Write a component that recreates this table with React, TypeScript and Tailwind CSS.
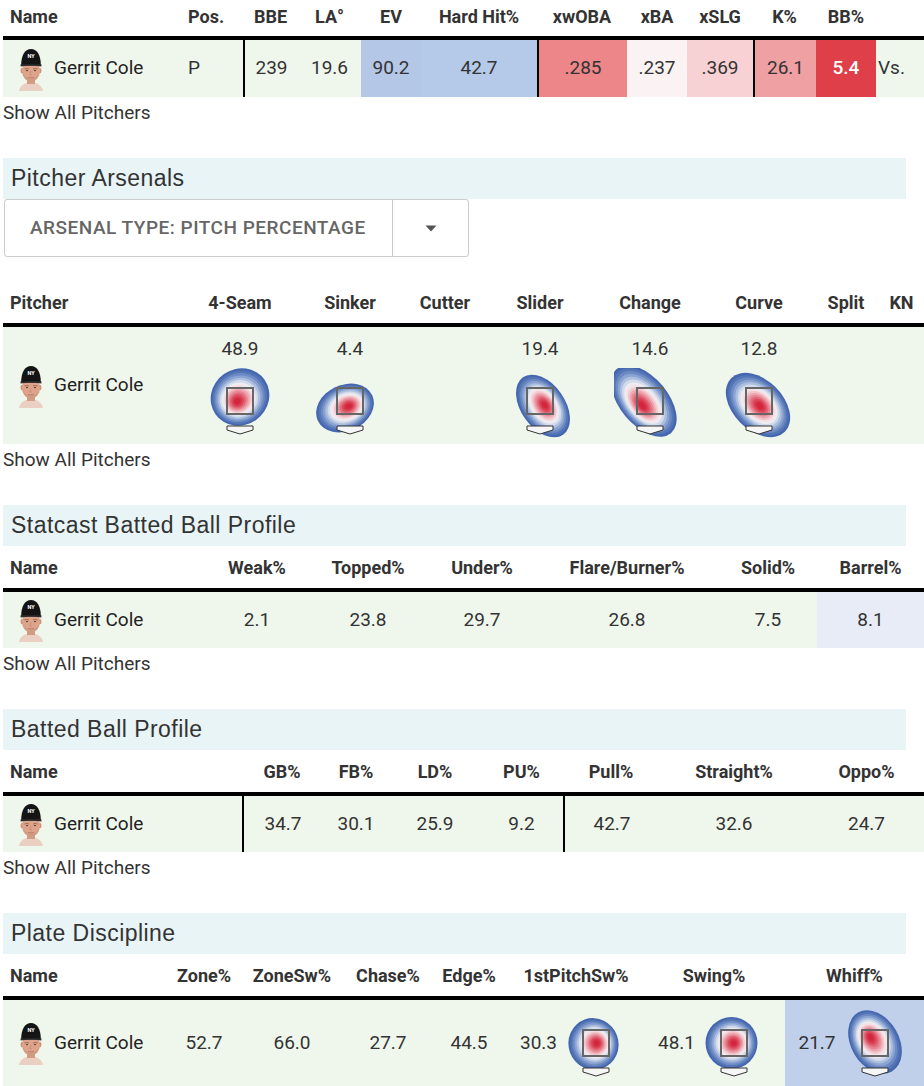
import React from 'react';

type HM = { cx: number; cy: number; rx: number; ry: number; rot: number; hx: number; hy: number };

const LEVELS: [number, string][] = [
  [1.0, '#4567b0'],
  [0.93, '#5575b7'],
  [0.86, '#6c8bc4'],
  [0.79, '#8ba3d1'],
  [0.72, '#adbfdf'],
  [0.65, '#d2dbeb'],
  [0.58, '#edecf1'],
  [0.52, '#f5e2e6'],
  [0.46, '#f2c8ce'],
  [0.4, '#eda8b1'],
  [0.34, '#e78894'],
  [0.28, '#e16878'],
  [0.22, '#dc4b5d'],
  [0.16, '#d73549'],
  [0.1, '#d1263d'],
];

function Heatmap({ p, className = '' }: { p: HM; className?: string }) {
  return (
    <svg width="72" height="72" viewBox="0 0 72 72" className={`shrink-0 ${className}`}>
      {LEVELS.map(([s, col], i) => {
        const t = 1 - s;
        const x = p.cx + (p.hx - p.cx) * t;
        const y = p.cy + (p.hy - p.cy) * t;
        return (
          <ellipse
            key={i}
            cx={x}
            cy={y}
            rx={Math.max(p.rx * s, 2)}
            ry={Math.max(p.ry * s, 2)}
            fill={col}
            transform={`rotate(${p.rot} ${x} ${y})`}
          />
        );
      })}
      <rect x="23" y="20" width="26" height="26" fill="none" stroke="#666" strokeWidth="2" />
      <path d="M23 58 H49 V62 L36 66 L23 62 Z" fill="#f6f6f6" stroke="#333" strokeWidth="1" />
    </svg>
  );
}

const HM_4SEAM: HM = { cx: 36, cy: 29, rx: 30, ry: 28, rot: -35, hx: 33, hy: 34 };
const HM_SINKER: HM = { cx: 31, cy: 40, rx: 30, ry: 23, rot: -25, hx: 35, hy: 38 };
const HM_SLIDER: HM = { cx: 39, cy: 38, rx: 35, ry: 22, rot: 55, hx: 41, hy: 37 };
const HM_CHANGE: HM = { cx: 30, cy: 33, rx: 42, ry: 24, rot: 50, hx: 28, hy: 38 };
const HM_CURVE: HM = { cx: 35, cy: 37, rx: 38, ry: 25, rot: 45, hx: 37, hy: 38 };
const HM_FIRST: HM = { cx: 33.5, cy: 34, rx: 25, ry: 26, rot: -20, hx: 37, hy: 33 };
const HM_SWING: HM = { cx: 33.5, cy: 33, rx: 26, ry: 26, rot: 0, hx: 36, hy: 33 };
const HM_WHIFF: HM = { cx: 36, cy: 32, rx: 34, ry: 24, rot: 60, hx: 31, hy: 27 };

function Headshot() {
  return (
    <svg width="28" height="44" viewBox="0 0 28 44" className="shrink-0">
      <path d="M2 44 C3 38 8 35.5 14 35.5 C20 35.5 25 38 26 44 Z" fill="#ead0c2" />
      <rect x="10" y="31" width="8" height="6" fill="#d49c83" />
      <ellipse cx="5.2" cy="23.5" rx="1.7" ry="2.7" fill="#cf9276" />
      <ellipse cx="22.8" cy="23.5" rx="1.7" ry="2.7" fill="#cf9276" />
      <ellipse cx="14" cy="24" rx="9" ry="10.6" fill="#dda48b" />
      <path d="M7.5 22 Q10 21 12 22" stroke="#8a5f4c" strokeWidth="0.8" fill="none" />
      <path d="M16 22 Q18 21 20.5 22" stroke="#8a5f4c" strokeWidth="0.8" fill="none" />
      <ellipse cx="10" cy="23.6" rx="1.1" ry="0.6" fill="#4a3028" />
      <ellipse cx="18" cy="23.6" rx="1.1" ry="0.6" fill="#4a3028" />
      <path d="M14 24 L13 28 L15 28" stroke="#c08268" strokeWidth="0.6" fill="none" />
      <path d="M11 30.5 Q14 31.5 17 30.5" stroke="#a86a55" strokeWidth="0.7" fill="none" />
      <path d="M5.5 25 Q6.5 33 14 35 Q21.5 33 22.5 25 Q20.5 31 14 32 Q7.5 31 5.5 25 Z" fill="#c4937a" opacity="0.55" />
      <path d="M4.2 18.5 C4 8.5 7.8 2 14 2 C20.2 2 24 8.5 23.8 18.5 Z" fill="#141414" />
      <path d="M3.6 17.2 H24.4 V19.6 C20 18.6 8 18.6 3.6 19.6 Z" fill="#2b2b2b" />
      <text x="14" y="10.5" fontSize="5.5" fill="#fff" textAnchor="middle" fontWeight="bold" fontFamily="Roboto, sans-serif">NY</text>
    </svg>
  );
}

function NameCell({ className = '' }: { className?: string }) {
  return (
    <div className={`flex items-center pl-[14px] gap-[9px] ${className}`}>
      <Headshot />
      <span className="text-[19px] text-[#222]">Gerrit Cole</span>
    </div>
  );
}

function SectionBar({ title }: { title: string }) {
  return (
    <div className="h-[41px] w-[903px] bg-[#e8f4f6] flex items-center pl-[8px]">
      <span className="font-['Liberation_Sans',Arial,sans-serif] text-[23px] tracking-[0.02em] text-[#333]">{title}</span>
    </div>
  );
}

function ShowAll() {
  return <div className="mt-[3px] h-[26px] leading-[26px] text-[19px] text-[#333]">Show All Pitchers</div>;
}

const BlackLine = () => <div className="h-[4px] bg-black w-[921px]" />;

const H = ({ children, className = '' }: { children?: React.ReactNode; className?: string }) => (
  <div className={`flex items-center justify-center text-[18px] font-bold text-[#333] whitespace-nowrap ${className}`}>{children}</div>
);
const C = ({ children, className = '' }: { children?: React.ReactNode; className?: string }) => (
  <div className={`flex items-center justify-center text-[19px] text-[#333] whitespace-nowrap ${className}`}>{children}</div>
);

function Table1() {
  const cols = 'grid grid-cols-[177px_63px_55px_63px_60px_116px_90px_60px_66px_63px_60px_48px]';
  return (
    <div>
      <div className={`${cols} h-[36px] pb-[4px]`}>
        <H className="justify-start pl-[7px]">Name</H>
        <H className="justify-start pl-[8px]">Pos.</H>
        <H>BBE</H>
        <H>LA°</H>
        <H>EV</H>
        <H>Hard Hit%</H>
        <H>xwOBA</H>
        <H>xBA</H>
        <H>xSLG</H>
        <H>K%</H>
        <H>BB%</H>
        <H />
      </div>
      <BlackLine />
      <div className={`${cols} h-[57px]`}>
        <NameCell className="bg-[#eff7ec]" />
        <C className="bg-[#eff7ec] justify-start pl-[8px]">P</C>
        <C className="bg-[#eff7ec] border-l-2 border-black">239</C>
        <C className="bg-[#eff7ec]">19.6</C>
        <C className="bg-[#b4c7e7] text-[#1a1a1a]">90.2</C>
        <C className="bg-[#b5c9e9] text-[#1a1a1a]">42.7</C>
        <C className="bg-[#ec8689] text-[#1a1a1a] border-l-2 border-black">.285</C>
        <C className="bg-[#fbf3f3] text-[#1a1a1a]">.237</C>
        <C className="bg-[#f7d1d3] text-[#1a1a1a]">.369</C>
        <C className="bg-[#efa0a2] text-[#1a1a1a] border-l-2 border-black">26.1</C>
        <C className="bg-[#de3f49] text-white font-medium">5.4</C>
        <C className="bg-[#eff7ec] justify-start pl-[2px] text-[#1a1a1a]">Vs.</C>
      </div>
      <ShowAll />
    </div>
  );
}

function Dropdown() {
  return (
    <div className="h-[58px] w-[465px] ml-[1px] border border-[#cccccc] rounded-[3px] flex bg-white">
      <div className="w-[387px] flex items-center pl-[25px] text-[19px] font-medium uppercase tracking-[0.5px] text-[#666]">
        Arsenal Type: Pitch Percentage
      </div>
      <div className="flex-1 border-l border-[#cccccc] flex items-center justify-center">
        <svg width="12" height="7" viewBox="0 0 12 7">
          <path d="M0.5 0.5 H11.5 L6 6.5 Z" fill="#555" />
        </svg>
      </div>
    </div>
  );
}

function ArsenalCell({ value, hm }: { value?: string; hm?: HM }) {
  return (
    <div className="flex flex-col items-center pt-[10px] bg-[#eff7ec]">
      {value ? (
        <>
          <div className="h-[24px] leading-[24px] text-[19px] text-[#333]">{value}</div>
          <Heatmap p={hm!} className="mt-[7px]" />
        </>
      ) : null}
    </div>
  );
}

function Table2() {
  const cols = 'grid grid-cols-[182px_110px_110px_80px_110px_110px_108px_66px_45px]';
  return (
    <div>
      <div className={`${cols} h-[42px] mt-[24px]`}>
        <H className="justify-start pl-[7px]">Pitcher</H>
        <H>4-Seam</H>
        <H>Sinker</H>
        <H>Cutter</H>
        <H>Slider</H>
        <H>Change</H>
        <H>Curve</H>
        <H>Split</H>
        <H>KN</H>
      </div>
      <BlackLine />
      <div className={`${cols} h-[117px]`}>
        <NameCell className="bg-[#eff7ec]" />
        <ArsenalCell value="48.9" hm={HM_4SEAM} />
        <ArsenalCell value="4.4" hm={HM_SINKER} />
        <ArsenalCell />
        <ArsenalCell value="19.4" hm={HM_SLIDER} />
        <ArsenalCell value="14.6" hm={HM_CHANGE} />
        <ArsenalCell value="12.8" hm={HM_CURVE} />
        <ArsenalCell />
        <ArsenalCell />
      </div>
      <ShowAll />
    </div>
  );
}

function Table3() {
  const cols = 'grid grid-cols-[204px_100px_122px_106px_184px_98px_107px]';
  return (
    <div>
      <div className={`${cols} h-[42px]`}>
        <H className="justify-start pl-[7px]">Name</H>
        <H>Weak%</H>
        <H>Topped%</H>
        <H>Under%</H>
        <H>Flare/Burner%</H>
        <H>Solid%</H>
        <H>Barrel%</H>
      </div>
      <BlackLine />
      <div className={`${cols} h-[56px]`}>
        <NameCell className="bg-[#eff7ec]" />
        <C className="bg-[#eff7ec]">2.1</C>
        <C className="bg-[#eff7ec]">23.8</C>
        <C className="bg-[#eff7ec]">29.7</C>
        <C className="bg-[#eff7ec]">26.8</C>
        <C className="bg-[#eff7ec]">7.5</C>
        <C className="bg-[#e7ecf7] text-[#1a1a1a]">8.1</C>
      </div>
      <ShowAll />
    </div>
  );
}

function Table4() {
  const cols = 'grid grid-cols-[239px_80px_68px_90px_83px_96px_150px_115px]';
  return (
    <div>
      <div className={`${cols} h-[42px]`}>
        <H className="justify-start pl-[7px]">Name</H>
        <H>GB%</H>
        <H>FB%</H>
        <H>LD%</H>
        <H>PU%</H>
        <H>Pull%</H>
        <H>Straight%</H>
        <H>Oppo%</H>
      </div>
      <BlackLine />
      <div className={`${cols} h-[56px]`}>
        <NameCell className="bg-[#eff7ec]" />
        <C className="bg-[#eff7ec] border-l-2 border-black">34.7</C>
        <C className="bg-[#eff7ec]">30.1</C>
        <C className="bg-[#eff7ec]">25.9</C>
        <C className="bg-[#eff7ec]">9.2</C>
        <C className="bg-[#eff7ec] border-l-2 border-black">42.7</C>
        <C className="bg-[#eff7ec]">32.6</C>
        <C className="bg-[#eff7ec]">24.7</C>
      </div>
      <ShowAll />
    </div>
  );
}

function Table5() {
  const cols = 'grid grid-cols-[168px_66px_110px_82px_80px_134px_142px_139px]';
  return (
    <div>
      <div className={`${cols} h-[42px]`}>
        <H className="justify-start pl-[7px]">Name</H>
        <H>Zone%</H>
        <H>ZoneSw%</H>
        <H>Chase%</H>
        <H>Edge%</H>
        <H>1stPitchSw%</H>
        <H>Swing%</H>
        <H>Whiff%</H>
      </div>
      <BlackLine />
      <div className={`${cols} h-[86px]`}>
        <NameCell className="bg-[#eff7ec]" />
        <C className="bg-[#eff7ec]">52.7</C>
        <C className="bg-[#eff7ec]">66.0</C>
        <C className="bg-[#eff7ec]">27.7</C>
        <C className="bg-[#eff7ec]">44.5</C>
        <C className="bg-[#eff7ec] gap-[3px]">
          <span>30.3</span>
          <Heatmap p={HM_FIRST} className="mt-[6px]" />
        </C>
        <C className="bg-[#eff7ec] gap-[3px]">
          <span>48.1</span>
          <Heatmap p={HM_SWING} className="mt-[6px]" />
        </C>
        <C className="bg-[#c0d0ea] gap-[3px] text-[#1a1a1a]">
          <span>21.7</span>
          <Heatmap p={HM_WHIFF} className="mt-[6px]" />
        </C>
      </div>
    </div>
  );
}

export default function App() {
  return (
    <div className="w-[924px] h-[1086px] overflow-hidden bg-white font-['Roboto',sans-serif] text-[#333]">
      <div className="pl-[3px]">
        <Table1 />
        <div className="mt-[32px]">
          <SectionBar title="Pitcher Arsenals" />
          <Dropdown />
          <Table2 />
        </div>
        <div className="mt-[32px]">
          <SectionBar title="Statcast Batted Ball Profile" />
          <Table3 />
        </div>
        <div className="mt-[32px]">
          <SectionBar title="Batted Ball Profile" />
          <Table4 />
        </div>
        <div className="mt-[32px]">
          <SectionBar title="Plate Discipline" />
          <Table5 />
        </div>
      </div>
    </div>
  );
}
